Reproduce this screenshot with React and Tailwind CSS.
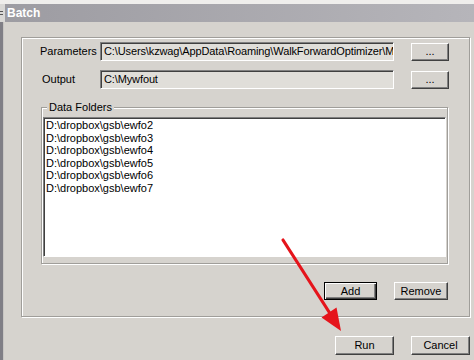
import React from "react";

const font = { fontFamily: '"Liberation Sans", Arial, sans-serif' };

function Btn({ children, className = "", def = false }) {
  return (
    <div
      className={`flex items-center justify-center bg-[#d6d3ce] text-[11px] text-black ${
        def
          ? "border border-black shadow-[inset_1px_1px_0_#fff,inset_-1px_-1px_0_#404040,inset_-2px_-2px_0_#808080]"
          : "border border-t-white border-l-white border-b-[#404040] border-r-[#404040] shadow-[inset_-1px_-1px_0_#808080]"
      } ${className}`}
    >
      {children}
    </div>
  );
}

function Field({ children }) {
  return (
    <div className="h-[19px] w-[294px] overflow-hidden whitespace-nowrap border border-t-[#808080] border-l-[#808080] border-b-white border-r-white bg-[#e0ded9] pl-[3px] text-[11px] leading-[16px] tracking-[-0.12px] text-black shadow-[inset_1px_1px_0_#404040]">
      {children}
    </div>
  );
}

export default function App() {
  const items = [
    "D:\\dropbox\\gsb\\ewfo2",
    "D:\\dropbox\\gsb\\ewfo3",
    "D:\\dropbox\\gsb\\ewfo4",
    "D:\\dropbox\\gsb\\ewfo5",
    "D:\\dropbox\\gsb\\ewfo6",
    "D:\\dropbox\\gsb\\ewfo7",
  ];
  return (
    <div className="relative flex h-[360px] w-[474px] flex-col overflow-hidden bg-[#d6d3ce]" style={font}>
      <div className="h-[4px] bg-[#efeeec]" />
      <div className="flex h-[18px]">
        <div className="flex w-[5px] flex-col justify-center gap-[2px] bg-[#d9d8d6] pr-[2px]">
          <div className="h-[1px] bg-[#555]" />
          <div className="h-[1px] bg-[#555]" />
        </div>
        <div className="flex flex-1 items-center bg-gradient-to-r from-[#9d9ca2] to-[#b6b5ba] pl-[2px] text-[12px] font-bold text-white">
          Batch
        </div>
      </div>
      <div className="flex flex-1">
        <div className="w-[3px] bg-[#807f86]" />
        <div className="w-[1px] bg-[#c8c6c3]" />
        <div className="flex flex-1 flex-col pl-[17px] pr-[4px] pt-[15px]">
          <div className="flex h-[280px] flex-col border border-[#a09e9a] shadow-[inset_1px_1px_0_#fff,1px_1px_0_#fff]">
            <div className="mt-[4px] flex items-center pl-[18px]">
              <div className="w-[60px] text-[11px] text-black">Parameters</div>
              <Field>C:\Users\kzwag\AppData\Roaming\WalkForwardOptimizer\M</Field>
              <Btn className="ml-[17px] h-[18px] w-[38px] text-[#9a9a9a]">...</Btn>
            </div>
            <div className="mt-[9px] flex items-center pl-[20px]">
              <div className="w-[58px] text-[11px] text-black">Output</div>
              <Field>C:\Mywfout</Field>
              <Btn className="ml-[17px] h-[18px] w-[38px] text-[#9a9a9a]">...</Btn>
            </div>
            <fieldset className="ml-[19px] mt-[12px] w-[407px] border border-[#a09e9a] pb-[6px] pl-[1px] pr-[1px] shadow-[inset_1px_1px_0_#fff,1px_1px_0_#fff]">
              <legend className="ml-[4px] bg-[#d6d3ce] px-[2px] text-[11px] leading-[13px] text-black">
                Data Folders
              </legend>
              <div className="mt-[3px] h-[140px] border border-t-[#808080] border-l-[#808080] border-b-white border-r-white bg-white pl-[2px] pt-[1px] shadow-[inset_1px_1px_0_#404040]">
                {items.map((t) => (
                  <div key={t} className="text-[11px] leading-[12.5px] text-black">
                    {t}
                  </div>
                ))}
              </div>
            </fieldset>
            <div className="mt-[18px] flex justify-end gap-[17px] pr-[21px]">
              <Btn def className="h-[18px] w-[53px]">Add</Btn>
              <Btn className="h-[18px] w-[54px]">Remove</Btn>
            </div>
          </div>
          <div className="mt-[19px] flex justify-end gap-[17px]">
            <Btn className="h-[19px] w-[59px]">Run</Btn>
            <Btn className="h-[19px] w-[59px]">Cancel</Btn>
          </div>
        </div>
      </div>
      <svg className="pointer-events-none absolute left-0 top-0" width="474" height="360" viewBox="0 0 474 360">
        <line x1="283" y1="240" x2="331" y2="315" stroke="#e5141b" strokeWidth="3.2" strokeLinecap="round" />
        <polygon points="341,331 321.5,317.5 336.5,307.5" fill="#e5141b" />
      </svg>
    </div>
  );
}
